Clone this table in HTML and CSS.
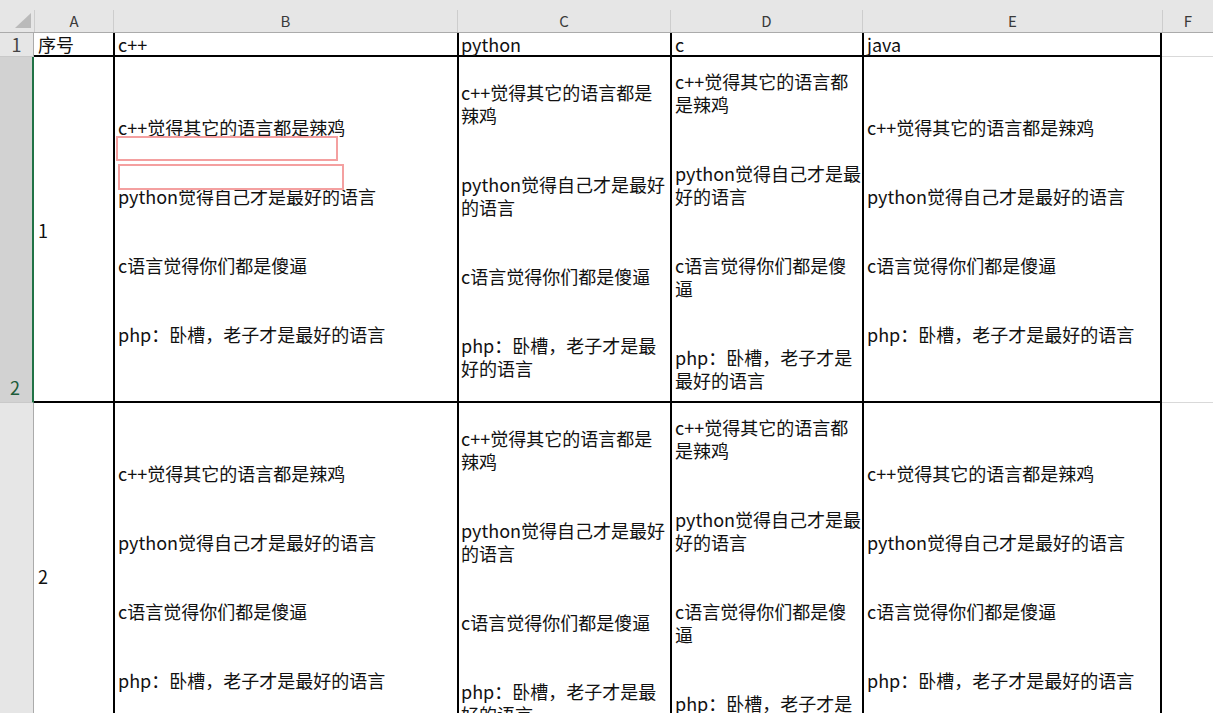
FILE: index.html
```html
<!DOCTYPE html>
<html lang="zh-CN">
<head>
<meta charset="utf-8">
<title>Sheet</title>
<link rel="stylesheet" href="styles.css">
</head>
<body>
<div class="sheet">
  <div class="corner"><svg width="34" height="33" viewBox="0 0 34 33"><polygon points="15,28 31,28 31,13" fill="#bababa"/></svg></div>
  <div class="ch"><span>A</span></div>
  <div class="ch"><span>B</span></div>
  <div class="ch"><span>C</span></div>
  <div class="ch"><span>D</span></div>
  <div class="ch"><span>E</span></div>
  <div class="ch"><span>F</span></div>

  <div class="rh rh1">1</div>
  <div class="c head ca">序号</div>
  <div class="c head cb">c++</div>
  <div class="c head cc">python</div>
  <div class="c head cd">c</div>
  <div class="c head ce">java</div>
  <div class="cf"></div>

  <div class="rh rh2">2</div>
  <div class="c ca body">1</div>
  <div class="c cb body">
    <div>c++觉得其它的语言都是辣鸡</div>
    <div>python觉得自己才是最好的语言</div>
    <div>c语言觉得你们都是傻逼</div>
    <div>php：卧槽，老子才是最好的语言</div>
  </div>
  <div class="c cc body">
    <div>c++觉得其它的语言都是辣鸡</div>
    <div>python觉得自己才是最好的语言</div>
    <div>c语言觉得你们都是傻逼</div>
    <div>php：卧槽，老子才是最好的语言</div>
  </div>
  <div class="c cd body">
    <div>c++觉得其它的语言都是辣鸡</div>
    <div>python觉得自己才是最好的语言</div>
    <div>c语言觉得你们都是傻逼</div>
    <div>php：卧槽，老子才是最好的语言</div>
  </div>
  <div class="c ce body">
    <div>c++觉得其它的语言都是辣鸡</div>
    <div>python觉得自己才是最好的语言</div>
    <div>c语言觉得你们都是傻逼</div>
    <div>php：卧槽，老子才是最好的语言</div>
  </div>
  <div class="cf"></div>

  <div class="rh rh3"></div>
  <div class="c ca body">2</div>
  <div class="c cb body">
    <div>c++觉得其它的语言都是辣鸡</div>
    <div>python觉得自己才是最好的语言</div>
    <div>c语言觉得你们都是傻逼</div>
    <div>php：卧槽，老子才是最好的语言</div>
  </div>
  <div class="c cc body">
    <div>c++觉得其它的语言都是辣鸡</div>
    <div>python觉得自己才是最好的语言</div>
    <div>c语言觉得你们都是傻逼</div>
    <div>php：卧槽，老子才是最好的语言</div>
  </div>
  <div class="c cd body">
    <div>c++觉得其它的语言都是辣鸡</div>
    <div>python觉得自己才是最好的语言</div>
    <div>c语言觉得你们都是傻逼</div>
    <div>php：卧槽，老子才是最好的语言</div>
  </div>
  <div class="c ce body">
    <div>c++觉得其它的语言都是辣鸡</div>
    <div>python觉得自己才是最好的语言</div>
    <div>c语言觉得你们都是傻逼</div>
    <div>php：卧槽，老子才是最好的语言</div>
  </div>
  <div class="cf"></div>

  <div class="note note1"></div>
  <div class="note note2"></div>
</div>
</body>
</html>
```
FILE: styles.css
```css
* { box-sizing: border-box; }

html, body {
  margin: 0;
  padding: 0;
  background: #ffffff;
  overflow: hidden;
}

body {
  font-family: "Noto Sans CJK SC", "Noto Sans", sans-serif;
}

.sheet {
  position: relative;
  display: grid;
  grid-template-columns: 34px 79px 344px 213px 192px 300px 1fr;
  grid-template-rows: 33px 24px 346px 346px;
  width: 1213px;
  height: 713px;
  overflow: hidden;
}

/* header row */
.corner {
  background: #e6e6e6;
  border-bottom: 1px solid #ababab;
}
.corner svg { display: block; }

.ch {
  background: #e6e6e6;
  border-bottom: 1px solid #ababab;
  padding-top: 10px;
  display: flex;
}
.ch span {
  flex: 1;
  border-left: 1px solid #cdcdcd;
  text-align: center;
  font-size: 15px;
  line-height: 22px;
  color: #3a3a3a;
}

/* row headers */
.rh {
  background: #e6e6e6;
  border-right: 1px solid #ababab;
  border-bottom: 1px solid #c9c9c9;
  font-size: 18px;
  line-height: 22px;
  color: #444444;
  text-align: center;
}
.rh2 {
  background: #d2d2d2;
  border-right: 2px solid #217346;
  color: #1d5c3a;
  display: flex;
  align-items: flex-end;
  justify-content: center;
  padding-bottom: 4px;
  padding-right: 2px;
}

/* cells */
.c {
  background: #ffffff;
  border-bottom: 2px solid #000000;
  font-size: 18px;
  line-height: 23px;
  color: #111111;
  display: flex;
  flex-direction: column;
  justify-content: center;
  gap: 46px;
  overflow: visible;
}
.c.head { line-height: 22px; }
.c.body { padding-top: 3px; }

.ca { padding-left: 4px; padding-right: 2px; }
.cb { border-left: 2px solid #000; padding-left: 3px; padding-right: 3px; white-space: nowrap; }
.cc { border-left: 2px solid #000; padding-left: 2px; padding-right: 4px; }
.cd { border-left: 2px solid #000; padding-left: 3px; padding-right: 0; }
.ce { border-left: 2px solid #000; border-right: 2px solid #000; padding-left: 3px; padding-right: 3px; white-space: nowrap; }

.cf {
  background: #ffffff;
  border-bottom: 1px solid #d9d9d9;
}

/* overlay shapes */
.note {
  position: absolute;
  border: 2px solid #f4a0a0;
  background: transparent;
}
.note1 { left: 116px; top: 136px; width: 222px; height: 25px; }
.note2 { left: 118px; top: 164px; width: 226px; height: 26px; }
```
